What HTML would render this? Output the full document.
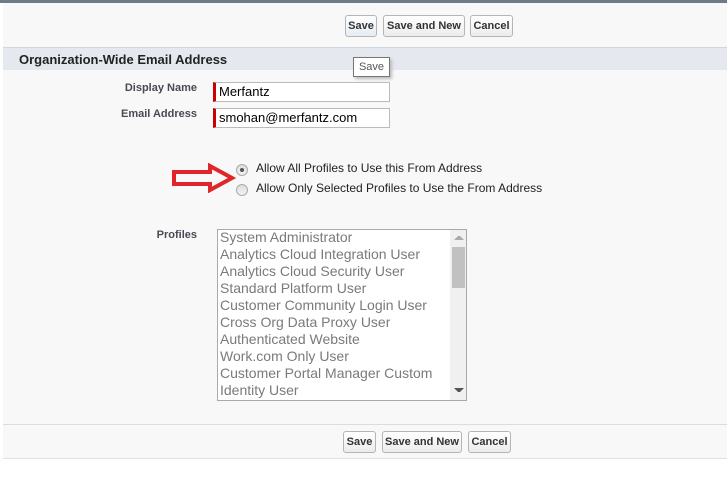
<!DOCTYPE html>
<html><head><meta charset="utf-8"><style>
*{margin:0;padding:0;box-sizing:border-box}
body{width:727px;height:486px;background:#fff;font-family:"Liberation Sans",Arial,sans-serif;position:relative;overflow:hidden}
.abs{position:absolute}
.panel{left:3px;top:3px;width:724px;height:456px;background:#f8f8f8;border-bottom:1px solid #e0e0e0}
.btn{position:absolute;height:22px;border:1px solid #b5b5b5;border-radius:3px;background:linear-gradient(#fff,#ececec);font-size:11px;font-weight:bold;color:#333;line-height:20px;text-align:center}
.lbl{position:absolute;font-size:11px;font-weight:bold;color:#4a4a56;text-align:right;width:120px}
.inp{position:absolute;height:20px;border:1px solid #bbb;border-left:3px solid #c00;background:#fff;font-size:13px;line-height:18px;padding-left:3px;color:#000}
.radio{position:absolute;width:12px;height:12px;border-radius:50%;border:1px solid #aaa;background:linear-gradient(#ddd,#f4f4f4)}
.rt{position:absolute;font-size:12px;color:#222}
.list div{height:17px;line-height:17px;font-size:14px;color:#7a7a7a;padding-left:2px;white-space:nowrap}
</style></head><body>
<div class="abs" style="left:0;top:0;width:727px;height:3px;background:#6d7a8c"></div>
<div class="abs panel"></div>
<div class="btn" style="left:345px;top:15px;width:32px;background:linear-gradient(#fff,#e4ecf2)">Save</div>
<div class="btn" style="left:383px;top:15px;width:82px">Save and New</div>
<div class="btn" style="left:470px;top:15px;width:43px">Cancel</div>
<div class="abs" style="left:3px;top:47px;width:724px;height:23px;background:#e5e9ef;border-top:1px solid #cfd6de"></div>
<div class="abs" style="left:19px;top:52px;font-size:13px;font-weight:bold;color:#222">Organization-Wide Email Address</div>
<div class="abs" style="left:353px;top:57px;width:37px;height:20px;border:1px solid #767676;background:#fff;font-size:11px;color:#555;text-align:center;line-height:18px;box-shadow:2px 2px 3px #bbb">Save</div>
<div class="lbl" style="left:77px;top:82px">Display Name</div>
<div class="inp" style="left:213px;top:82px;width:177px">Merfantz</div>
<div class="lbl" style="left:77px;top:108px">Email Address</div>
<div class="inp" style="left:213px;top:108px;width:177px">smohan@merfantz.com</div>
<div class="radio" style="left:236px;top:164px"><div style="position:absolute;left:3px;top:3px;width:4px;height:4px;border-radius:50%;background:#555"></div></div>
<div class="rt" style="left:256px;top:161px">Allow All Profiles to Use this From Address</div>
<div class="radio" style="left:236px;top:184px"></div>
<div class="rt" style="left:256px;top:181px">Allow Only Selected Profiles to Use the From Address</div>
<svg class="abs" style="left:170px;top:163px" width="68" height="30"><path d="M4 9 H40 V3 L62 15 L40 27 V21 H4 Z" fill="none" stroke="#e0252b" stroke-width="4" stroke-linejoin="miter"/></svg>
<div class="lbl" style="left:77px;top:229px">Profiles</div>
<div class="abs list" style="left:217px;top:229px;width:250px;height:172px;border:1px solid #aaa;background:#fff;overflow:hidden">
<div style="margin-top:-1px">System Administrator</div><div>Analytics Cloud Integration User</div><div>Analytics Cloud Security User</div><div>Standard Platform User</div><div>Customer Community Login User</div><div>Cross Org Data Proxy User</div><div>Authenticated Website</div><div>Work.com Only User</div><div>Customer Portal Manager Custom</div><div>Identity User</div>
<div class="abs" style="left:232px;top:0;width:16px;height:170px;background:#f0f0f0">
<div class="abs" style="left:4px;top:6px;width:0;height:0;border-left:4px solid transparent;border-right:4px solid transparent;border-bottom:4px solid #aaa"></div>
<div class="abs" style="left:2px;top:17px;width:13px;height:41px;background:#c1c1c1"></div>
<div class="abs" style="left:4px;top:158px;width:0;height:0;border-left:4px solid transparent;border-right:4px solid transparent;border-top:4px solid #555"></div>
</div></div>
<div class="abs" style="left:3px;top:424px;width:724px;height:1px;background:#dcdcdc"></div>
<div class="btn" style="left:343px;top:431px;width:33px">Save</div>
<div class="btn" style="left:382px;top:431px;width:80px">Save and New</div>
<div class="btn" style="left:468px;top:431px;width:43px">Cancel</div>
</body></html>
